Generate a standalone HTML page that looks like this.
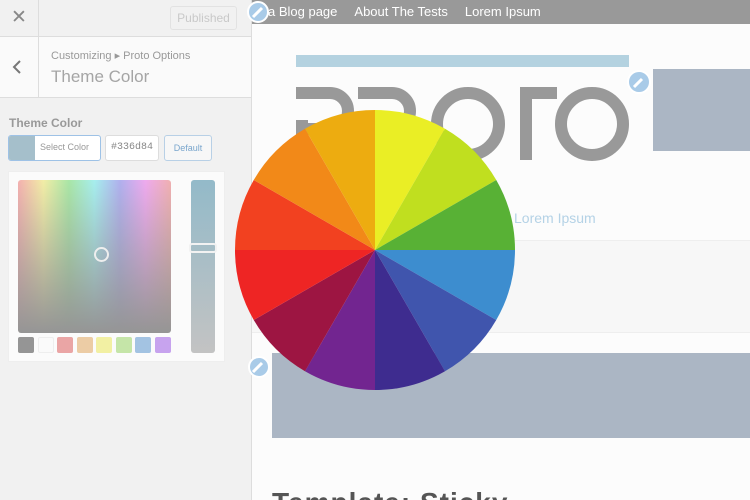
<!DOCTYPE html>
<html style="width:750px;height:500px;overflow:hidden"><head><meta charset="utf-8"><style>
*{box-sizing:border-box;margin:0;padding:0}
body{width:750px;height:500px;overflow:hidden;position:relative;font-family:"Liberation Sans",sans-serif;background:#fcfcfc}
.abs{position:absolute}
</style></head><body>
<!-- preview -->
<div class="abs" style="left:252px;top:0;width:498px;height:500px;background:#fcfcfc"></div>
<div class="abs" style="left:252px;top:0;width:498px;height:24px;background:#999"></div>
<div class="abs" style="left:268px;top:4px;color:#fff;font-size:13px;white-space:nowrap">a Blog page<span style="margin-left:17px">About The Tests</span><span style="margin-left:17px">Lorem Ipsum</span></div>
<div class="abs" style="left:296px;top:55px;width:333px;height:12px;background:#b4d2e0"></div>
<div class="abs" style="left:653px;top:69px;width:97px;height:82px;background:#abb6c4"></div>
<div class="abs" style="left:252px;top:240px;width:498px;height:93px;background:#f7f7f7;border-top:1px solid #eee;border-bottom:1px solid #eee"></div>
<div class="abs" style="left:514px;top:210px;color:#b4d2e6;font-size:14px">Lorem Ipsum</div>
<div class="abs" style="left:272px;top:353px;width:478px;height:85px;background:#abb6c4"></div>
<div class="abs" style="left:272px;top:488px;color:#555;font-size:28px;font-weight:bold;letter-spacing:1px;line-height:30px">Template: Sticky</div>
<svg class="abs" style="left:0;top:0" width="750" height="500">
<g fill="none" stroke="#999" stroke-width="12">
<path d="M296 93 H330 A18 18 0 0 1 330 129 H302 M302 120 V160"/>
<path d="M358 93 H392 A18 18 0 0 1 392 129 H364"/>
<circle cx="468" cy="124" r="31"/>
<path d="M526 160 V93 H557"/>
<circle cx="592" cy="124" r="31"/>
</g>
</svg>
<!-- sidebar -->
<div class="abs" style="left:0;top:0;width:252px;height:500px;background:#f1f1f1;border-right:1px solid #ddd"></div>
<div class="abs" style="left:0;top:0;width:252px;height:37px;border-bottom:1px solid #ddd"></div>
<div class="abs" style="left:38px;top:0;width:1px;height:98px;background:#ddd"></div>
<div class="abs" style="left:11px;top:6px;color:#888;font-size:19px">✕</div>
<div class="abs" style="left:170px;top:6px;width:67px;height:24px;border:1px solid #e2e2e2;border-radius:3px;color:#c9c9c9;font-size:12px;text-align:center;line-height:22px">Published</div>
<div class="abs" style="left:0;top:37px;width:251px;height:61px;background:#fafafa;border-bottom:1px solid #ddd"></div>
<div class="abs" style="left:38px;top:37px;width:1px;height:61px;background:#ddd"></div>
<svg class="abs" style="left:12px;top:60px" width="10" height="14"><path d="M8 1 L2 7 L8 13" fill="none" stroke="#777" stroke-width="2"/></svg>
<div class="abs" style="left:51px;top:49px;color:#999;font-size:11px">Customizing ▸ Proto Options</div>
<div class="abs" style="left:51px;top:67px;color:#a5a5a5;font-size:17px">Theme Color</div>
<div class="abs" style="left:9px;top:116px;color:#999;font-size:12px;font-weight:bold">Theme Color</div>
<div class="abs" style="left:8px;top:135px;width:93px;height:26px;border:1px solid #9ec2e6;border-radius:3px;background:#fff;overflow:hidden">
<div style="position:absolute;left:0;top:0;width:26px;height:24px;background:#a5bfcb"></div>
<div style="position:absolute;left:31px;top:6px;font-size:9px;color:#999">Select Color</div></div>
<div class="abs" style="left:105px;top:135px;width:54px;height:26px;border:1px solid #ddd;border-radius:3px;background:#fff;font-size:10px;color:#888;font-family:'Liberation Mono',monospace;line-height:24px;text-align:center">#336d84</div>
<div class="abs" style="left:164px;top:135px;width:48px;height:26px;border:1px solid #b8d0e6;border-radius:3px;background:#f7f7f7;font-size:9px;color:#7aa6cd;line-height:24px;text-align:center">Default</div>
<div class="abs" style="left:8px;top:171px;width:217px;height:191px;background:#fbfbfb;border:1px solid #eee"></div>
<div class="abs" style="left:18px;top:180px;width:153px;height:153px;border-radius:3px;background:linear-gradient(to bottom,rgba(150,150,150,0),#959595),linear-gradient(to right,#f4b0b0,#f2eda6,#a9e6a6,#a6eeee,#b0b0ee,#eeaaee,#f0b0b0)"></div>
<div class="abs" style="left:94px;top:247px;width:15px;height:15px;border:2px solid #eee;border-radius:50%"></div>
<div class="abs" style="left:191px;top:180px;width:24px;height:173px;border-radius:3px;background:linear-gradient(#93bac9,#c3c3c3)"></div>
<div class="abs" style="left:189px;top:243px;width:28px;height:10px;border:2px solid #f2f2f2;border-radius:3px"></div>
<div class="abs" style="left:18px;top:337px;display:flex;gap:3.5px">
<div style="width:16px;height:16px;border-radius:2px;background:#959595"></div>
<div style="width:16px;height:16px;border-radius:2px;background:#fafafa;border:1px solid #eee"></div>
<div style="width:16px;height:16px;border-radius:2px;background:#eaa5a5"></div>
<div style="width:16px;height:16px;border-radius:2px;background:#eccca5"></div>
<div style="width:16px;height:16px;border-radius:2px;background:#f2f0a3"></div>
<div style="width:16px;height:16px;border-radius:2px;background:#c5e5a8"></div>
<div style="width:16px;height:16px;border-radius:2px;background:#a3c3e2"></div>
<div style="width:16px;height:16px;border-radius:2px;background:#c7a3ee"></div>
</div>
<!-- wheel + pencils on top -->
<svg class="abs" style="left:0;top:0" width="750" height="500">
<g>
<path d="M375 250 L375 110 A140 140 0 0 1 445 128.76Z" fill="#eaee25"/>
<path d="M375 250 L445 128.76 A140 140 0 0 1 496.24 180Z" fill="#c0df1f"/>
<path d="M375 250 L496.24 180 A140 140 0 0 1 515 250Z" fill="#58b135"/>
<path d="M375 250 L515 250 A140 140 0 0 1 496.24 320Z" fill="#3d8dcf"/>
<path d="M375 250 L496.24 320 A140 140 0 0 1 445 371.24Z" fill="#4055ad"/>
<path d="M375 250 L445 371.24 A140 140 0 0 1 375 390Z" fill="#3e2c8f"/>
<path d="M375 250 L375 390 A140 140 0 0 1 305 371.24Z" fill="#722590"/>
<path d="M375 250 L305 371.24 A140 140 0 0 1 253.76 320Z" fill="#9d1542"/>
<path d="M375 250 L253.76 320 A140 140 0 0 1 235 250Z" fill="#ee2524"/>
<path d="M375 250 L235 250 A140 140 0 0 1 253.76 180Z" fill="#f24120"/>
<path d="M375 250 L253.76 180 A140 140 0 0 1 305 128.76Z" fill="#f28918"/>
<path d="M375 250 L305 128.76 A140 140 0 0 1 375 110Z" fill="#edac10"/>
</g>
<g>
<circle cx="258" cy="12" r="10" fill="#a9cbe8" stroke="#fff" stroke-width="2"/>
<circle cx="639" cy="82" r="11" fill="#a9cbe8" stroke="#fff" stroke-width="2"/>
<circle cx="259" cy="367" r="10" fill="#a9cbe8" stroke="#fff" stroke-width="2"/>
<path d="M634 87 L642 79 M253 372 L262 363 M253 17 L262 8" stroke="#fff" stroke-width="3"/>
</g>
</svg>
</body></html>
